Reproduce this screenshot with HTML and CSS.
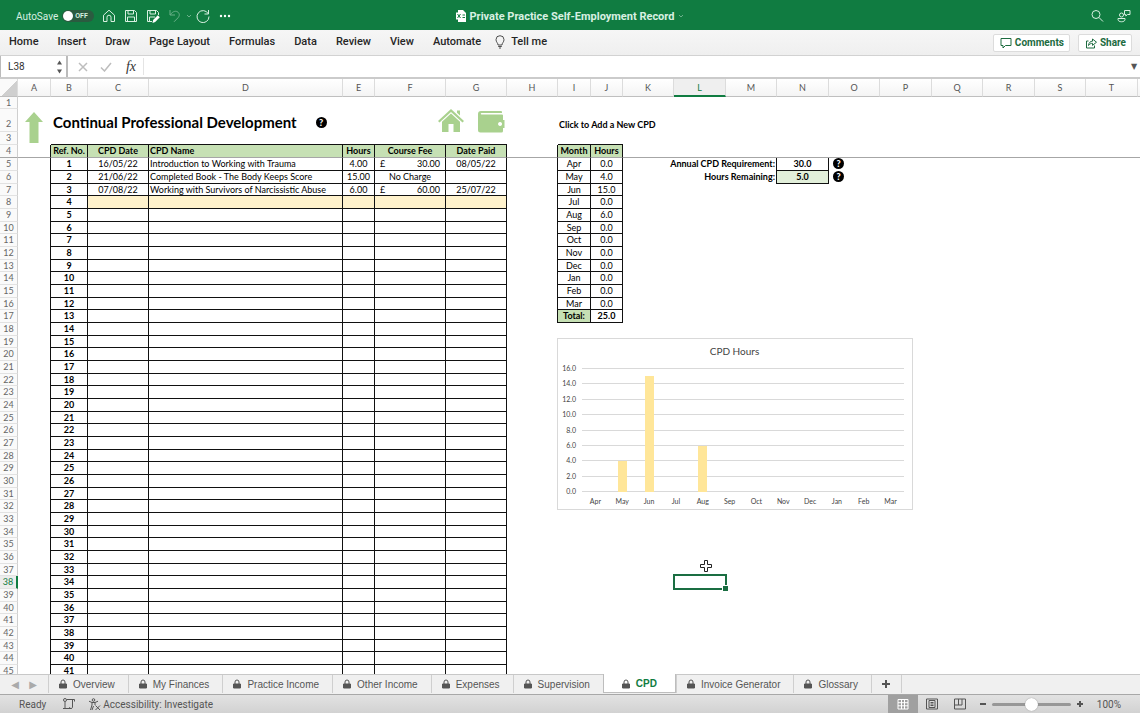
FILE: index.html
```html
<!DOCTYPE html>
<html lang="en">
<head>
    <meta charset="UTF-8">
    <meta name="viewport" content="width=device-width, initial-scale=1.0">
    <title>Private Practice Self-Employment Record</title>
    <link rel="stylesheet" href="styles.css">
</head>
<body>
    <header class="titlebar">
        <div class="quick">
            <label class="autosave" for="autosave">AutoSave</label>
            <span class="switch">
                <input type="checkbox" id="autosave">
                <span class="switch-text">OFF</span>
            </span>
            <button aria-label="Home"><svg width="14" height="14" viewBox="0 0 14 14"><path d="M1.5 6.2 7 1.2l5.500 5v6.300H9V8.200a2 2 0 0 0-4 0v4.300H1.500z"/></svg></button>
            <button aria-label="Save"><svg width="14" height="14" viewBox="0 0 14 14"><path d="M1.500 1.500h9l2 2v9h-11zM4 1.500v3.500h5.500V1.500M3.500 12.500V8h7v4.500"/></svg></button>
            <button aria-label="Save a copy"><svg width="14" height="14" viewBox="0 0 14 14"><path d="M6 12.500H1.500v-11h9l2 2V6M4 1.500v3.500h5.500V1.500M3.500 12.500V8H9"/><path class="pen" d="M6.500 14l.6-3 4.700-4.700 2 2L9.200 13z"/></svg></button>
            <button class="dim" aria-label="Undo"><svg width="14" height="14" viewBox="0 0 14 14"><path d="M2 1v5h5M2.200 5.800C5 2 8 1.500 10 3.200c2 1.800 1.500 4-.2 5.800L6 12.800"/></svg></button>
            <button class="dim small" aria-label="Undo history"><svg width="6" height="6" viewBox="0 0 6 6"><path d="M1 2l2 2 2-2"/></svg></button>
            <button aria-label="Redo"><svg width="14" height="14" viewBox="0 0 14 14"><path d="M12.500 1v4H8.500M12.300 4.800A6 6 0 1 0 13 7.500"/></svg></button>
            <button aria-label="More"><svg width="14" height="14" viewBox="0 0 14 14"><g class="dots"><circle cx="3" cy="7" r="1.200"/><circle cx="7" cy="7" r="1.200"/><circle cx="11" cy="7" r="1.200"/></g></svg></button>
        </div>
        <h1 class="doc">
            <svg width="10" height="12" viewBox="0 0 10 12"><path class="solid" d="M2 0h5l3 3v9H2V9.500H0v-7h2z"/><path class="cut" d="M1.500 4l3 4M4.500 4l-3 4M6.500 5H9M6.500 7.500H9"/></svg>
            Private Practice Self-Employment Record
            <svg class="dim" width="6" height="6" viewBox="0 0 6 6"><path d="M1 2l2 2 2-2"/></svg>
        </h1>
        <div class="account">
            <button aria-label="Search"><svg width="14" height="14" viewBox="0 0 14 14"><circle cx="6" cy="5.500" r="4"/><path d="M9 8.500l4 4"/></svg></button>
            <button aria-label="Account"><svg width="14" height="14" viewBox="0 0 14 14"><circle cx="4.500" cy="6" r="2"/><path d="M1 9.500h7v1c0 3-7 3-7 0zM7.500 1.500H13v4h-2.500L8.800 7V5.500H7.500z"/></svg></button>
        </div>
    </header>

    <nav class="ribbon">
        <a href="#">Home</a>
        <a href="#">Insert</a>
        <a href="#">Draw</a>
        <a href="#">Page Layout</a>
        <a href="#">Formulas</a>
        <a href="#">Data</a>
        <a href="#">Review</a>
        <a href="#">View</a>
        <a href="#">Automate</a>
        <a href="#" class="tell"><svg width="10" height="14" viewBox="0 0 10 14"><path d="M3 10C3 8 1 7 1 4.700a4 4 0 0 1 8 0C9 7 7 8 7 10zM3.200 11.500h3.600M4 13h2"/></svg>Tell me</a>
        <div class="actions">
            <button><svg width="12" height="12" viewBox="0 0 12 12"><path d="M1 1.500h10v7H5.500L3 11V8.500H1z"/></svg>Comments</button>
            <button><svg width="12" height="12" viewBox="0 0 12 12"><path d="M3.500 4H1.500v7h8V8.500M3.500 8.500c.3-3 2-4.300 4-4.300V2l4 3.200-4 3.200V6.300C6 6.300 4.500 7 3.500 8.500z"/></svg>Share</button>
        </div>
    </nav>

    <div class="formula">
        <div class="namebox">
            <input type="text" value="L38" aria-label="Name box">
            <svg width="7" height="16" viewBox="0 0 7 16"><path d="M3.500 1.500l2.500 4H1zM3.500 14.500l2.500-4H1z"/></svg>
        </div>
        <button aria-label="Cancel"><svg width="10" height="10" viewBox="0 0 10 10"><path d="M1 1l8 8M9 1L1 9"/></svg></button>
        <button aria-label="Enter"><svg width="12" height="10" viewBox="0 0 12 10"><path d="M1 5.500L4.500 9 11 1"/></svg></button>
        <button class="fx" aria-label="Insert function">fx</button>
        <input class="formula-input" type="text" aria-label="Formula bar">
        <button class="expand" aria-label="Expand">▼</button>
    </div>

    <main class="sheet">
        <table class="grid" id="grid"></table>

        <a class="shape arrow" href="#" aria-label="Back to top"><svg width="18" height="32" viewBox="0 0 18 32"><path d="M9 0l9 10h-4.500v21h-9V10H0z"/></svg></a>
        <a class="shape home" href="#" aria-label="Overview"><svg width="26" height="24" viewBox="0 0 26 24"><path d="M13 0l13 12-1.500 1.500L13 3 1.500 13.500 0 12z"/><path d="M13 4.500l9 8.300V23h-6.500v-8h-5v8H4V12.800zM19 1.500h3v5l-3-2.800z"/></svg></a>
        <a class="shape wallet" href="#" aria-label="My Finances"><svg width="27" height="22" viewBox="0 0 27 22"><path fill-rule="evenodd" d="M3 0h20a1 1 0 0 1 1 1v1H3.500a.7.7 0 0 0 0 1.500H24a1 1 0 0 1 1 1V9h1.500v8H25v3a1.500 1.500 0 0 1-1.500 1.500H2.500A2.500 2.500 0 0 1 0 19V3a3 3 0 0 1 3-3zM22 11a2 2 0 1 0 .1 0z"/></svg></a>

        <figure class="chart">
            <figcaption>CPD Hours</figcaption>
            <div class="y-axis" id="yAxis"></div>
            <div class="plot">
                <div class="lines" id="lines"></div>
                <div class="bars" id="bars"></div>
            </div>
            <div class="x-axis" id="xAxis"></div>
        </figure>

        <svg class="cursor" width="14" height="14" viewBox="0 0 14 14"><path d="M5.500 1.500h3v4h4v3h-4v4h-3v-4h-4v-3h4z"/></svg>
    </main>

    <nav class="tabs" id="tabs">
        <button class="nav-arrow" aria-label="Previous sheet">◀</button>
        <button class="nav-arrow" aria-label="Next sheet">▶</button>
    </nav>

    <footer class="status">
        <span>Ready</span>
        <button aria-label="Record macro"><svg width="14" height="12" viewBox="0 0 14 12"><path d="M3 4v6.500h6.500M3 10.500H1M5 1.500h7.500M10.500 1.500v7.500c0 2-3 2-3 0M12.500 1.500v2"/><circle cx="3" cy="2" r="1.500"/></svg></button>
        <button class="access"><svg width="13" height="13" viewBox="0 0 13 13"><circle cx="5.500" cy="2" r="1.300"/><path d="M1 3.200l3 1.300v2.500L2.500 12M10 3.200L7 4.500V7M4 4.500h3M5.500 8L4 12M7.500 7.500l4.500 4.500M12 7.500L7.500 12"/></svg>Accessibility: Investigate</button>
        <div class="views">
            <button class="active" aria-label="Normal view"><svg width="12" height="12" viewBox="0 0 12 12"><path d="M1 1.500h10v9.500H1zM4.500 1.500V11M7.500 1.500V11M1 4.700h10M1 7.800h10"/></svg></button>
            <button aria-label="Page layout view"><svg width="12" height="12" viewBox="0 0 12 12"><path d="M.5 1h11v10H.5zM3 2.500h6v7H3zM4.500 4.500h3M4.500 6h3M4.500 7.500h3"/></svg></button>
            <button aria-label="Page break view"><svg width="12" height="12" viewBox="0 0 12 12"><path d="M.5 1h11v10H.5zM.5 7H8V1M4.500 1v6"/></svg></button>
        </div>
        <div class="zoom">
            <button aria-label="Zoom out"><svg width="8" height="8" viewBox="0 0 8 8"><path d="M1 4h6"/></svg></button>
            <input type="range" min="0" max="100" value="50" aria-label="Zoom">
            <button aria-label="Zoom in"><svg width="8" height="8" viewBox="0 0 8 8"><path d="M1 4h6M4 1v6"/></svg></button>
            <span>100%</span>
        </div>
    </footer>

    <script src="sheet.js"></script>
</body>
</html>
```

FILE: styles.css
```css
* {
    box-sizing: border-box;
}
body {
    margin: 0;
    height: 100vh;
    display: flex;
    flex-direction: column;
    overflow: hidden;
    font-family: Roboto, "Liberation Sans", sans-serif;
    font-size: 10px;
    color: #262626;
    background: #fff;
}
button, input {
    font: inherit;
    color: inherit;
    border: none;
    background: none;
    padding: 0;
    margin: 0;
}
button {
    display: flex;
    align-items: center;
    justify-content: center;
}
a {
    color: inherit;
    text-decoration: none;
}
svg {
    display: block;
    flex: none;
    fill: none;
    stroke: currentColor;
}

/* title bar */
.titlebar {
    flex: none;
    height: 30px;
    padding: 2px 9px 0 16px;
    display: grid;
    grid-template-columns: 1fr auto 1fr;
    align-items: center;
    background: #107c41;
    color: #d8f0e1;
}
.quick {
    display: flex;
    align-items: center;
    gap: 8px;
}
.autosave {
    margin-right: -4px;
}
.switch {
    position: relative;
    width: 32px;
    height: 12px;
}
.switch input {
    display: block;
    appearance: none;
    width: 32px;
    height: 12px;
    border-radius: 6px;
    background: #2b5b40;
}
.switch input::before {
    content: "";
    display: block;
    width: 10px;
    height: 10px;
    margin: 1px;
    border-radius: 50%;
    background: #fff;
    position: absolute;
}
.switch-text {
    position: absolute;
    left: 13px;
    top: 0;
    font-size: 7px;
    line-height: 12px;
    font-weight: 600;
    pointer-events: none;
}
.dim {
    opacity: 0.45;
}
.small {
    margin: 0 -4px;
}
.pen, .dots, .solid {
    fill: #fff;
    stroke: none;
}
.cut {
    stroke: #107c41;
}
.doc {
    margin: 0;
    padding-right: 7px;
    display: flex;
    align-items: center;
    gap: 4px;
    font-size: 11px;
    font-weight: bold;
}
.account {
    display: flex;
    justify-content: flex-end;
    gap: 13px;
}

/* ribbon */
.ribbon {
    flex: none;
    height: 26px;
    padding: 0 8px 2px 9px;
    display: flex;
    align-items: center;
    gap: 19px;
    font-size: 11px;
    font-weight: 500;
    background: linear-gradient(#f6f6f6, #efefef);
    border-bottom: 1px solid #d2d2d2;
}
.tell {
    display: flex;
    align-items: center;
    gap: 6px;
    margin-left: -5px;
}
.tell svg {
    stroke-width: 0.8;
}
.actions {
    margin-left: auto;
    display: flex;
    gap: 8px;
}
.actions button {
    height: 18px;
    padding: 0 5px 0 6px;
    gap: 3px;
    margin-top: 2px;
    font-size: 10px;
    font-weight: bold;
    color: #1c6b3f;
    background: #fff;
    border: 1px solid #dcdcdc;
    border-radius: 2px;
}

/* formula bar */
.formula {
    flex: none;
    height: 23px;
    display: flex;
    align-items: center;
    gap: 12px;
    border-bottom: 2px solid #cbcbcb;
    color: #bdbdbd;
}
.namebox {
    width: 68px;
    height: 21px;
    padding: 0 3px 0 7px;
    display: flex;
    align-items: center;
    border-right: 2px solid #bbb;
    border-left: 1px solid #bbb;
    color: #333;
}
.namebox input {
    min-width: 0;
    flex: 1;
}
.namebox svg {
    fill: #555;
    stroke: none;
}
.formula > button svg {
    stroke-width: 1.5;
}
.formula > button:nth-of-type(1) {
    margin-left: -2px;
}
.fx {
    width: 14px;
    font-family: "Liberation Serif", serif;
    font-style: italic;
    font-size: 14px;
    color: #333;
}
.formula-input {
    flex: 1;
    height: 17px;
    margin-left: -7px;
    border-left: 1px solid #e4e4e4;
}
.expand {
    width: 12px;
    font-family: "DejaVu Sans", sans-serif;
    font-size: 8px;
    color: #555;
}

/* worksheet */
.sheet {
    flex: 1;
    min-height: 0;
    position: relative;
    overflow: hidden;
    font-family: Lato, "Liberation Sans", sans-serif;
    font-size: 9px;
    color: #000;
}
.grid {
    table-layout: fixed;
    border-collapse: separate;
    border-spacing: 0;
    width: 1168px;
}
.grid th, .grid td {
    padding: 0;
    height: 13px;
    line-height: 11px;
    text-align: center;
    vertical-align: top;
    white-space: nowrap;
    font-weight: normal;
    border: 0 solid #111;
}
.grid tbody tr:nth-child(3n+1) > * {
    height: 12px;
}
.grid tbody tr:nth-child(1) > * {
    height: 12px;
}
.grid tbody tr:nth-child(2) > * {
    height: 23px;
    line-height: 15px;
    vertical-align: bottom;
}
.grid tbody tr:nth-child(4) > * {
    height: 13px;
    border-bottom: 1px solid #a6a6a6;
}
.grid thead th {
    height: 18px;
    vertical-align: middle;
    color: #555;
    background: linear-gradient(#fff, #f4f4f4);
    border-right: 1px solid #dcdcdc;
    border-bottom: 1px solid #bfbfbf;
}
.grid thead .corner {
    background: linear-gradient(135deg, #fafafa 55%, #cfcfcf 55%);
}
.grid tbody th {
    color: #666;
    background: #fafafa;
    border-right: 1px solid #cfcfcf;
    border-bottom: 1px solid #e2e2e2;
}
.grid thead .current {
    color: #107c41;
    background: #efefef;
    border-bottom: 2px solid #107c41;
}
.grid tbody th.current {
    color: #107c41;
    background: #ececec;
    border-right: 2px solid #107c41;
}
.grid td.box {
    border-right: 1px solid #111;
    border-bottom: 1px solid #111;
}
.grid td.edge-right {
    border-right: 1px solid #111;
}
.grid td.edge-bottom {
    border-bottom: 1px solid #111;
}
.grid td.bold {
    font-weight: bold;
}
.grid td.left {
    text-align: left;
    padding-left: 1px;
}
.grid td.right {
    text-align: right;
    padding-right: 1px;
}
.grid td.head {
    font-weight: bold;
    background: #c6e0b4;
}
.grid td.next {
    background: #fff2cc;
}
.grid td.remaining {
    background: #e2efda;
}
.grid td.title {
    padding-left: 2px;
}
.title-line, .fee {
    display: flex;
    align-items: center;
}
.title-line {
    gap: 19px;
    font-size: 15px;
    line-height: 19px;
    font-weight: bold;
}
.fee {
    justify-content: space-between;
    padding: 0 5px;
}
.help {
    width: 11px;
    height: 11px;
    border-radius: 50%;
    background: #000;
    color: #fff;
    font-size: 9px;
    line-height: 11px;
    font-weight: 900;
}
.grid td.help-cell {
    padding-left: 4px;
}
.grid td.selected {
    position: relative;
}
.selected::before {
    content: "";
    position: absolute;
    inset: -2px -1px -1px;
    border: 2px solid #1a6e42;
}
.selected::after {
    content: "";
    position: absolute;
    right: -2px;
    bottom: -2px;
    width: 5px;
    height: 5px;
    background: #1a6e42;
    border: 1px solid #fff;
    border-width: 1px 0 0 1px;
}
.shape {
    position: absolute;
}
.shape svg {
    fill: #a9d18e;
    stroke: none;
}
.arrow {
    left: 25px;
    top: 33px;
}
.home {
    left: 438px;
    top: 30px;
}
.wallet {
    left: 478px;
    top: 32px;
}
.cursor {
    position: absolute;
    left: 699px;
    top: 480px;
    fill: #fff;
    stroke: #222;
}

/* chart */
.chart {
    position: absolute;
    left: 557px;
    top: 259px;
    width: 356px;
    height: 172px;
    margin: 0;
    padding: 0 8px 2px 0;
    display: grid;
    grid-template-columns: 24px 1fr;
    grid-template-rows: 29px 124px 1fr;
    background: #fff;
    border: 1px solid #d9d9d9;
    font-size: 7px;
    color: #444;
}
.chart figcaption {
    grid-column: 1 / 3;
    padding: 5px 0 0 7px;
    text-align: center;
    font-size: 10px;
    line-height: 15px;
}
.y-axis {
    margin: -6px 0 -5px;
    padding-right: 6px;
    display: flex;
    flex-direction: column;
    justify-content: space-between;
    text-align: right;
    line-height: 12px;
}
.plot {
    position: relative;
}
.lines {
    position: absolute;
    inset: 0;
    display: flex;
    flex-direction: column;
    justify-content: space-between;
}
.lines i {
    height: 1px;
    background: #d9d9d9;
}
.bars {
    position: relative;
    height: 100%;
    display: grid;
    grid-template-columns: repeat(12, 1fr);
    justify-items: center;
    align-items: end;
}
.bars i {
    width: 9px;
    background: #ffe699;
}
.x-axis {
    grid-column: 2;
    display: grid;
    grid-template-columns: repeat(12, 1fr);
    text-align: center;
    line-height: 18px;
}

/* sheet tabs */
.tabs {
    flex: none;
    height: 21px;
    display: flex;
    background: #f0f0f0;
    border-top: 1px solid #c8c8c8;
    border-bottom: 1px solid #a8a8a8;
    font-family: "Liberation Sans", sans-serif;
    color: #555;
}
.tabs button {
    height: 18px;
    flex: none;
}
.nav-arrow {
    width: 18px;
    font-family: "DejaVu Sans", sans-serif;
    font-size: 10px;
    color: #aaa;
}
.nav-arrow:first-child {
    margin-left: 6px;
}
.nav-arrow + .tab {
    margin-left: 6px;
}
.tab {
    padding: 0 13px 0 10px;
    gap: 6px;
    border-left: 1px solid #cfcfcf;
}
.tab svg {
    fill: #555;
}
.tabs .tab.active {
    height: 19px;
    margin-top: -1px;
    padding: 1px 18px 0;
    font-weight: bold;
    color: #107c41;
    background: #fff;
    border: 1px solid #bdbdbd;
    border-top: none;
}
.tab.active svg {
    color: #555;
}
.add {
    width: 31px;
    border: solid #cfcfcf;
    border-width: 0 1px;
}
.add svg {
    stroke-width: 2;
}

/* status bar */
.status {
    flex: none;
    height: 18px;
    padding: 0 19px;
    display: flex;
    align-items: center;
    gap: 16px;
    background: linear-gradient(#e2e2e2, #d2d2d2);
    color: #555;
}
.access {
    gap: 2px;
    margin-left: -4px;
}
.views {
    margin-left: auto;
    display: flex;
    align-self: stretch;
}
.views button {
    width: 28px;
}
.views .active {
    width: 30px;
    color: #fff;
    background: #a0a0a0;
}
.zoom {
    display: flex;
    align-items: center;
    gap: 5px;
    margin-left: -11px;
}
.zoom button svg {
    stroke-width: 2;
}
.zoom span {
    margin-left: 8px;
}
.zoom input {
    appearance: none;
    width: 79px;
    height: 3px;
    border-radius: 2px;
    background: #979797;
}
.zoom input::-webkit-slider-thumb {
    appearance: none;
    width: 13px;
    height: 13px;
    border-radius: 50%;
    background: #fff;
    box-shadow: 0 0 1px #777;
}
```

FILE: sheet.js
```javascript
const widths = {
    A: 33, B: 37, C: 61, D: 194, E: 32, F: 71, G: 61, H: 51, I: 33, J: 32, K: 51,
    L: 52, M: 51, N: 52, O: 51, P: 52, Q: 51, R: 52, S: 51, T: 52, '': 30
};
const columns = Object.keys(widths);
const lastRow = 45;

const months = ['Apr', 'May', 'Jun', 'Jul', 'Aug', 'Sep', 'Oct', 'Nov', 'Dec', 'Jan', 'Feb', 'Mar'];
const hours = [0, 4, 15, 0, 6, 0, 0, 0, 0, 0, 0, 0];

const help = '<button class="help" aria-label="Help">?</button>';
const fee = amount => `<div class="fee"><span>£</span><span>${amount}</span></div>`;

// address -> { html, cls, span }
const cells = {};
function set(address, html, cls = '', span = 1) {
    cells[address] = { html, cls, span };
}

set('B2', `<div class="title-line">Continual Professional Development ${help}</div>`, 'left title', 4);
set('I2', '<a href="#">Click to Add a New CPD</a>', 'left bold', 3);

['Ref. No.', 'CPD Date', 'CPD Name', 'Hours', 'Course Fee', 'Date Paid'].forEach((text, i) => {
    set(columns[i + 1] + '3', '', 'edge-bottom');
    set(columns[i + 1] + '4', text, 'edge-right head' + (i === 2 ? ' left' : ''));
});

const entries = [
    ['16/05/22', 'Introduction to Working with Trauma', '4.00', fee('30.00'), '08/05/22'],
    ['21/06/22', 'Completed Book - The Body Keeps Score', '15.00', 'No Charge', ''],
    ['07/08/22', 'Working with Survivors of Narcissistic Abuse', '6.00', fee('60.00'), '25/07/22']
];

set('A4', '', 'edge-right');
for (let row = 5; row <= lastRow; row++) {
    const entry = entries[row - 5] || ['', '', '', '', ''];
    set('A' + row, '', 'edge-right');
    set('B' + row, row - 4, 'box bold');
    entry.forEach((text, i) => {
        let cls = 'box';
        if (i === 1) cls += ' left';
        if (row === 8) cls += ' next';
        set(columns[i + 2] + row, text, cls);
    });
}

set('I3', '', 'edge-bottom');
set('J3', '', 'edge-bottom');
set('I4', 'Month', 'edge-right head');
set('J4', 'Hours', 'edge-right head');
months.forEach((month, i) => {
    set('I' + (i + 5), month, 'box');
    set('J' + (i + 5), hours[i].toFixed(1), 'box');
});
set('I17', 'Total:', 'box head');
set('J17', '25.0', 'box bold');
for (let row = 4; row <= 17; row++) {
    set('H' + row, '', 'edge-right');
}

set('K5', 'Annual CPD Requirement:', 'right bold edge-right', 3);
set('N5', '30.0', 'box bold');
set('O5', help, 'help-cell');
set('K6', 'Hours Remaining:', 'right bold edge-right', 3);
set('N6', '5.0', 'box bold remaining');
set('O6', help, 'help-cell');
set('L38', '', 'selected');

let html = '<colgroup><col style="width:18px">';
html += columns.map(c => `<col style="width:${widths[c]}px">`).join('');
html += '</colgroup><thead><tr><th class="corner"></th>';
html += columns.map(c => `<th${c === 'L' ? ' class="current"' : ''}>${c}</th>`).join('');
html += '</tr></thead><tbody>';
for (let row = 1; row <= lastRow; row++) {
    html += `<tr><th${row === 38 ? ' class="current"' : ''}>${row}</th>`;
    for (let i = 0; i < columns.length; i++) {
        const cell = cells[columns[i] + row];
        if (cell) {
            html += `<td class="${cell.cls}" colspan="${cell.span}">${cell.html}</td>`;
            i += cell.span - 1;
        } else {
            html += '<td></td>';
        }
    }
    html += '</tr>';
}
document.getElementById('grid').innerHTML = html + '</tbody>';

// chart
const max = 16;
for (let value = max; value >= 0; value -= 2) {
    document.getElementById('yAxis').innerHTML += `<span>${value.toFixed(1)}</span>`;
    document.getElementById('lines').innerHTML += '<i></i>';
}
document.getElementById('bars').innerHTML = hours.map(h => `<i style="height:${h / max * 100}%"></i>`).join('');
document.getElementById('xAxis').innerHTML = months.map(m => `<span>${m}</span>`).join('');

// tabs
const lock = '<svg width="8" height="10" viewBox="0 0 8 10"><path d="M2 5V3a2 2 0 0 1 4 0v2" fill="none"/><path d="M.5 5h7v4h-7z"/></svg>';
const sheets = ['Overview', 'My Finances', 'Practice Income', 'Other Income', 'Expenses',
    'Supervision', 'CPD', 'Invoice Generator', 'Glossary'];
document.getElementById('tabs').insertAdjacentHTML('beforeend',
    sheets.map(s => `<button class="tab${s === 'CPD' ? ' active' : ''}">${lock}${s}</button>`).join('') +
    '<button class="add" aria-label="Add sheet"><svg width="10" height="10" viewBox="0 0 10 10"><path d="M1 5h8M5 1v8"/></svg></button>');
```
